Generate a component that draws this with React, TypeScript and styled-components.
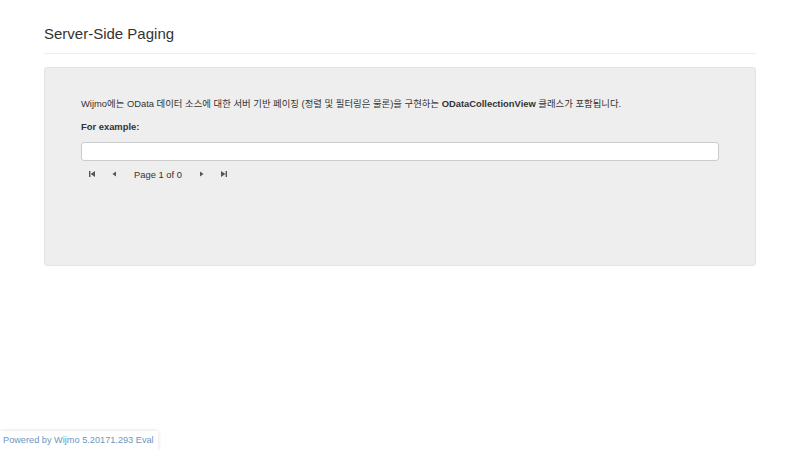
import styled, { createGlobalStyle } from "styled-components";

const GlobalStyle = createGlobalStyle`
  html, body {
    margin: 0;
    padding: 0;
    background: #fff;
    font-family: "Liberation Sans", Arial, "Noto Sans CJK KR", sans-serif;
    color: #333;
  }
`

const Page = styled.div`
  width: 800px;
  height: 450px;
  position: relative;
  overflow: hidden;
`

const Container = styled.div`
  padding: 0 44px;
`

const Header = styled.div`
  padding-top: 24px;
  padding-bottom: 9px;
  border-bottom: 1px solid #eee;
  margin-bottom: 13px;
`

const Title = styled.h3`
  margin: 0;
  font-size: 15px;
  font-weight: 400;
  line-height: 20px;
  color: #333;
`

const Well = styled.div`
  background: #eee;
  border: 1px solid #e3e3e3;
  border-radius: 3px;
  height: 199px;
  box-sizing: border-box;
  padding: 29px 36px;
  font-size: 9.4px;
`

const Paragraph = styled.p`
  margin: 0 0 9px;
  line-height: 14px;
`

const Label = styled.p`
  margin: 0 0 8px;
  font-weight: 700;
  line-height: 14px;
`

const GridBox = styled.div`
  height: 19px;
  background: #fff;
  border: 1px solid #ccc;
  border-radius: 3px;
  box-sizing: border-box;
`

const Pager = styled.div`
  display: flex;
  align-items: center;
  height: 26px;
`

const PagerButton = styled.button`
  width: 22px;
  height: 22px;
  border: none;
  background: transparent;
  padding: 0;
  display: flex;
  align-items: center;
  justify-content: center;
  color: #555;
`

const PageLabel = styled.span`
  padding: 0 9px;
  font-size: 9.4px;
  color: #333;
`

const Footer = styled.div`
  position: absolute;
  left: 0;
  bottom: 0;
  padding: 4px 4px 5px 3px;
  background: #fff;
  box-shadow: 0 0 4px rgba(0, 0, 0, 0.15);
  font-size: 9.2px;
  color: #6b96bf;
`

const Icon = ({ kind }: { kind: "first" | "prev" | "next" | "last" }) => {
  if (kind === "first")
    return (
      <svg width="8" height="8" viewBox="0 0 8 8">
        <rect x="1" y="1" width="1.4" height="6" fill="currentColor" />
        <path d="M7 1 L2.6 4 L7 7 Z" fill="currentColor" />
      </svg>
    )
  if (kind === "prev")
    return (
      <svg width="8" height="8" viewBox="0 0 8 8">
        <path d="M6 1.5 L2.5 4 L6 6.5 Z" fill="currentColor" />
      </svg>
    )
  if (kind === "next")
    return (
      <svg width="8" height="8" viewBox="0 0 8 8">
        <path d="M2 1.5 L5.5 4 L2 6.5 Z" fill="currentColor" />
      </svg>
    )
  return (
    <svg width="8" height="8" viewBox="0 0 8 8">
      <path d="M1 1 L5.4 4 L1 7 Z" fill="currentColor" />
      <rect x="5.6" y="1" width="1.4" height="6" fill="currentColor" />
    </svg>
  )
}

const App = () => {
  return (
    <Page>
      <GlobalStyle />
      <Container>
        <Header>
          <Title>Server-Side Paging</Title>
        </Header>
        <Well>
          <Paragraph>
            Wijmo에는 OData 데이터 소스에 대한 서버 기반 페이징 (정렬 및 필터링은 물론)을 구현하는{" "}
            <b>ODataCollectionView</b> 클래스가 포함됩니다.
          </Paragraph>
          <Label>For example:</Label>
          <GridBox />
          <Pager>
            <PagerButton><Icon kind="first" /></PagerButton>
            <PagerButton><Icon kind="prev" /></PagerButton>
            <PageLabel>Page 1 of 0</PageLabel>
            <PagerButton><Icon kind="next" /></PagerButton>
            <PagerButton><Icon kind="last" /></PagerButton>
          </Pager>
        </Well>
      </Container>
      <Footer>Powered by Wijmo 5.20171.293 Eval</Footer>
    </Page>
  )
}

export default App;
